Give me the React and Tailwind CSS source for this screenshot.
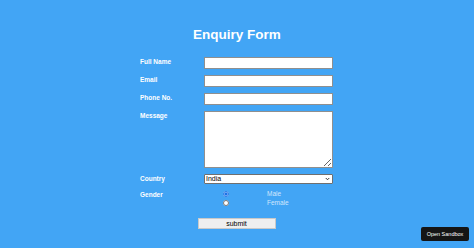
import React from "react";

export default function App() {
  return (
    <div className="relative min-h-screen w-full bg-[#42a5f5] font-['Liberation_Sans',Arial,sans-serif] overflow-hidden">
      <h1 className="pt-[28px] text-center text-[13.5px] leading-[14px] font-bold text-white">Enquiry Form</h1>
      <form className="mx-auto mt-[15px] w-[194px]" onSubmit={(e) => e.preventDefault()}>
        <div className="grid grid-cols-[64px_130px] gap-y-[6px] text-[6.5px] leading-[8px] font-bold text-white">
          <label className="pt-[1px]">Full Name</label>
          <input type="text" className="h-[12px] w-[129px] bg-white border border-[#8f8f8f] text-[7px] text-black px-[2px] outline-none" />
          <label className="pt-[1px]">Email</label>
          <input type="email" className="h-[12px] w-[129px] bg-white border border-[#8f8f8f] text-[7px] text-black px-[2px] outline-none" />
          <label className="pt-[1px]">Phone No.</label>
          <input type="tel" className="h-[12px] w-[129px] bg-white border border-[#8f8f8f] text-[7px] text-black px-[2px] outline-none" />
          <label className="pt-[1px]">Message</label>
          <textarea className="block h-[57px] w-[129px] bg-white border border-[#8f8f8f] text-[7px] text-black px-[2px] outline-none resize-y" />
          <label className="pt-[1px]">Country</label>
          <div className="relative h-[10px] w-[129px]">
            <select defaultValue="India" className="h-[10px] w-full appearance-none bg-white border border-[#6f6f6f] rounded-[1px] pl-[1px] text-[7px] leading-[8px] font-normal text-black outline-none">
              <option>India</option>
              <option>USA</option>
              <option>UK</option>
            </select>
            <svg className="pointer-events-none absolute right-[3px] top-[3px]" width="5" height="4" viewBox="0 0 10 8">
              <path d="M1.5 2 L5 5.5 L8.5 2" fill="none" stroke="#222" strokeWidth="1.8" />
            </svg>
          </div>
          <label className="pt-[1px]">Gender</label>
          <div className="grid grid-cols-[19px_44px_auto] items-center gap-y-[1px] font-normal text-white/75">
            <span />
            <input type="radio" name="gender" defaultChecked className="m-0 h-[6px] w-[6px] accent-[#1a73e8]" />
            <span>Male</span>
            <span />
            <input type="radio" name="gender" className="m-0 h-[6px] w-[6px]" />
            <span>Female</span>
          </div>
        </div>
        <div className="mt-[11px] flex justify-center pr-[1px]">
          <button type="submit" className="h-[11px] w-[78px] bg-[#efefef] border border-[#c9c9c9] text-[7px] leading-[8px] text-black">submit</button>
        </div>
      </form>
      <button className="absolute right-[5px] bottom-[7px] h-[14px] w-[48px] rounded-[2px] bg-[#151515] text-[5.5px] leading-[6px] text-white">Open Sandbox</button>
    </div>
  );
}
